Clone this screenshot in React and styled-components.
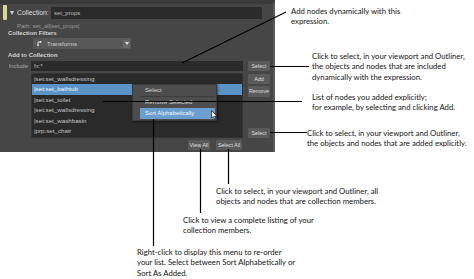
import React from "react";
import styled, { createGlobalStyle } from "styled-components";

const GlobalStyle = createGlobalStyle`
  html, body {
    margin: 0;
    padding: 0;
    background: #ffffff;
  }
  body {
    font-family: "Liberation Sans", Arial, sans-serif;
  }
`;

const Figure = styled.div`
  position: relative;
  width: 474px;
  height: 279px;
  overflow: hidden;
  background: #ffffff;
`;

/* ---------- editor panel ---------- */

const Panel = styled.div`
  width: 275px;
  height: 152px;
  box-sizing: border-box;
  background: #464646;
  border-top: 4px solid #3b3b3b;
  border-right: 2px solid #5a5a5a;
  display: flex;
  flex-direction: column;
  font-family: "Liberation Sans", Arial, sans-serif;
  font-size: 6px;
  color: #c8c8c8;
`;

const CollectionRow = styled.div`
  display: flex;
  align-items: center;
  height: 15px;
  margin-top: 1px;
  padding-left: 3px;
`;

const Marker = styled.div`
  width: 4px;
  height: 15px;
  background: #d9d98e;
  border-radius: 1px;
`;

const Caret = styled.div`
  width: 0;
  height: 0;
  margin-left: 3px;
  border-left: 2.5px solid transparent;
  border-right: 2.5px solid transparent;
  border-top: 4px solid #d0d0d0;
`;

const CollectionLabel = styled.span`
  width: 34px;
  margin-left: 3px;
  font-size: 6.8px;
  color: #dcdcdc;
  white-space: nowrap;
`;

const Field = styled.div`
  box-sizing: border-box;
  height: ${(p) => p.$h || 10}px;
  width: ${(p) => (p.$w ? `${p.$w}px` : "auto")};
  background: #2b2b2b;
  padding-left: 3px;
  line-height: ${(p) => p.$h || 10}px;
  color: #bdbdbd;
  white-space: nowrap;
`;

const PathRow = styled.div`
  height: 8px;
  margin-top: 2px;
  line-height: 8px;
  padding-left: 17px;
  color: #9a9a9a;
`;

const Heading = styled.div`
  height: ${(p) => p.$h}px;
  margin-top: ${(p) => p.$mt || 0}px;
  line-height: ${(p) => p.$h}px;
  padding-left: 8px;
  color: #d2d2d2;
  font-weight: bold;
  font-size: 6px;
`;

const Dropdown = styled.div`
  display: flex;
  align-items: center;
  box-sizing: border-box;
  width: 98px;
  height: 11px;
  margin: 1px 0 0 33px;
  padding: 0 1px 0 4px;
  background: #585858;
  color: #d0d0d0;
`;

const DropText = styled.span`
  flex: 1;
  margin-left: 4px;
`;

const DropArrow = styled.div`
  display: flex;
  align-items: center;
  justify-content: center;
  width: 7px;
  height: 8px;
  background: #686868;
  &::after {
    content: "";
    border-left: 2px solid transparent;
    border-right: 2px solid transparent;
    border-top: 3px solid #e0e0e0;
  }
`;

const IncludeGrid = styled.div`
  display: grid;
  grid-template-columns: 16px 212px 22px;
  grid-template-rows: 10px 65px 10px;
  column-gap: 5px;
  row-gap: 2px;
  margin: 1px 0 0 10px;
`;

const IncludeLabel = styled.span`
  justify-self: end;
  margin-right: -2px;
  line-height: 10px;
  color: #a8a8a8;
  white-space: nowrap;
`;

const Button = styled.button`
  box-sizing: border-box;
  width: ${(p) => p.$w || 22}px;
  height: ${(p) => p.$h || 10}px;
  padding: 0;
  border: none;
  border-radius: 1px;
  background: #5a5a5a;
  color: #dedede;
  font-family: "Liberation Sans", Arial, sans-serif;
  font-size: 5.4px;
  line-height: ${(p) => p.$h || 10}px;
  white-space: nowrap;
`;

const ButtonColumn = styled.div`
  display: flex;
  flex-direction: column;
  gap: 2px;
  padding-top: 1px;
  & > :last-child {
    margin-top: auto;
  }
`;

const List = styled.div`
  position: relative;
  box-sizing: border-box;
  background: #2a2a2a;
  border: 1px solid #333333;
`;

const ListRow = styled.div`
  height: 10.4px;
  line-height: 10.4px;
  padding-left: 2px;
  font-size: 6.2px;
  color: ${(p) => (p.$selected ? "#eef4fa" : "#c4c4c4")};
  background: ${(p) => (p.$selected ? "#5b93c6" : "transparent")};
  white-space: nowrap;
`;

const BottomButtons = styled.div`
  grid-column: 2;
  display: flex;
  justify-content: flex-end;
  gap: 6px;
  padding-right: 1px;
`;

/* ---------- right-click menu ---------- */

const Menu = styled.div`
  position: absolute;
  left: 100px;
  top: 10px;
  width: 85px;
  height: 37px;
  box-sizing: border-box;
  background: #4d4d4d;
  border: 1px solid #3a3a3a;
  box-shadow: 1px 1px 2px rgba(0, 0, 0, 0.5);
  display: flex;
  flex-direction: column;
`;

const MenuItem = styled.div`
  height: ${(p) => p.$h}px;
  line-height: ${(p) => p.$h}px;
  margin: 0 1px 0 7px;
  padding-left: 5px;
  color: ${(p) => (p.$active ? "#f2f6fa" : "#d4d4d4")};
  background: ${(p) => (p.$active ? "#6a9fcf" : "transparent")};
  white-space: nowrap;
`;

const MenuSeparator = styled.div`
  height: 1px;
  margin: 0 1px 0 7px;
  background: #3c3c3c;
`;

const Cursor = styled.svg`
  position: absolute;
  right: -2px;
  bottom: 0;
`;

/* ---------- callouts ---------- */

const Leaders = styled.svg`
  position: absolute;
  left: 0;
  top: 0;
  pointer-events: none;
`;

const Note = styled.div`
  position: absolute;
  left: ${(p) => p.$x}px;
  top: ${(p) => p.$y}px;
  font-family: Lato, "Open Sans", sans-serif;
  font-size: 7.75px;
  line-height: 10.7px;
  color: #141414;
  white-space: nowrap;
`;

const TransformIcon = () => (
  <svg width="6" height="7" viewBox="0 0 6 7">
    <path d="M1 6 L1 2 L4 2" stroke="#e6e6e6" strokeWidth="1" fill="none" />
    <path d="M3.2 0.8 L5 2 L3.2 3.2 Z" fill="#e6e6e6" />
    <path d="M0 4.6 L1 6.4 L2 4.6 Z" fill="#e6e6e6" />
  </svg>
);

const items = [
  "|set:set_wallsdressing",
  "|set:set_bathtub",
  "|set:set_toilet",
  "|set:set_wallsdressing",
  "|set:set_washbasin",
  "|prp:set_chair",
];

const notes = [
  { x: 291, y: 5.5, lines: ["Add nodes dynamically with this", "expression."] },
  {
    x: 312,
    y: 50.5,
    lines: [
      "Click to select, in your viewport and Outliner,",
      "the objects and nodes that are included",
      "dynamically with the expression.",
    ],
  },
  {
    x: 312,
    y: 91.5,
    lines: ["List of nodes you added explicitly;", "for example, by selecting and clicking Add."],
  },
  {
    x: 307,
    y: 127.5,
    lines: [
      "Click to select, in your viewport and Outliner,",
      "the objects and nodes that are added explicitly.",
    ],
  },
  {
    x: 216,
    y: 185.5,
    lines: [
      "Click to select, in your viewport and Outliner, all",
      "objects and nodes that are collection members.",
    ],
  },
  {
    x: 183,
    y: 214.5,
    lines: ["Click to view a complete listing of your", "collection members."],
  },
  {
    x: 137,
    y: 246.5,
    lines: [
      "Right-click to display this menu to re-order",
      "your list. Select between Sort Alphabetically or",
      "Sort As Added.",
    ],
  },
];

const leaders = [
  [182, 63, 286, 12],
  [270, 66.5, 309, 66.5],
  [103, 101.5, 302, 101.5],
  [270, 132.5, 307, 132.5],
  [228.5, 149, 228.5, 184],
  [200.5, 149, 200.5, 213],
  [153.5, 119, 153.5, 246],
];

export default function App() {
  return (
    <>
      <GlobalStyle />
      <Figure>
        <Panel>
          <CollectionRow>
            <Marker />
            <Caret />
            <CollectionLabel>Collection:</CollectionLabel>
            <Field $w={211} $h={12}>set_props</Field>
          </CollectionRow>

          <PathRow>Path: set_all|set_props|</PathRow>
          <Heading $h={7}>Collection Filters</Heading>

          <Dropdown>
            <TransformIcon />
            <DropText>Transforms</DropText>
            <DropArrow />
          </Dropdown>

          <Heading $h={10} $mt={1}>Add to Collection</Heading>

          <IncludeGrid>
            <IncludeLabel>Include</IncludeLabel>
            <Field $h={10}>fx:*</Field>
            <Button>Select</Button>

            <span />
            <List>
              {items.map((name, i) => (
                <ListRow key={i} $selected={i === 1}>
                  {name}
                </ListRow>
              ))}
              <Menu>
                <MenuItem $h={11}>Select</MenuItem>
                <MenuSeparator />
                <MenuItem $h={11}>Remove Selected</MenuItem>
                <MenuItem $h={11} $active>
                  Sort Alphabetically
                </MenuItem>
                <Cursor width="7" height="10" viewBox="0 0 7 10">
                  <path
                    d="M0.5 0.5 L0.5 8 L2.3 6.4 L3.6 9.3 L4.8 8.8 L3.6 6 L6 6 Z"
                    fill="#ffffff"
                    stroke="#111111"
                    strokeWidth="0.7"
                  />
                </Cursor>
              </Menu>
            </List>
            <ButtonColumn>
              <Button>Add</Button>
              <Button $h={11}>Remove</Button>
              <Button>Select</Button>
            </ButtonColumn>

            <BottomButtons>
              <Button>View All</Button>
              <Button $w={26}>Select All</Button>
            </BottomButtons>
          </IncludeGrid>
        </Panel>

        <Leaders width="474" height="279" viewBox="0 0 474 279">
          {leaders.map(([x1, y1, x2, y2], i) => (
            <line key={i} x1={x1} y1={y1} x2={x2} y2={y2} stroke="#000" strokeWidth="1.2" />
          ))}
        </Leaders>

        {notes.map((n, i) => (
          <Note key={i} $x={n.x} $y={n.y}>
            {n.lines.map((l, j) => (
              <div key={j}>{l}</div>
            ))}
          </Note>
        ))}
      </Figure>
    </>
  );
}
